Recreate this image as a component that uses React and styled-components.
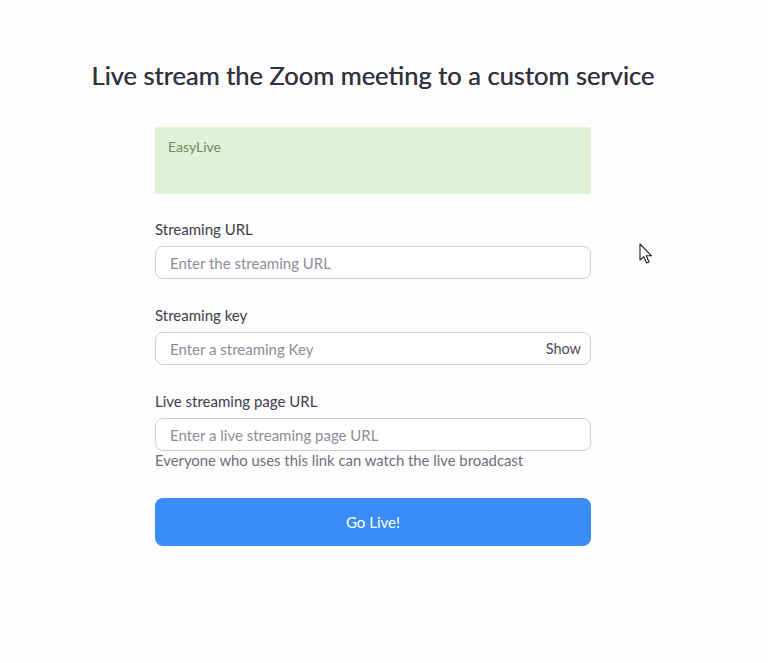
import React from "react"
import styled, { createGlobalStyle } from "styled-components"

const GlobalStyle = createGlobalStyle`
  html, body {
    margin: 0;
    padding: 0;
    background: #fdfdfd;
  }
  body {
    font-family: Lato, "Open Sans", "Liberation Sans", sans-serif;
    -webkit-font-smoothing: antialiased;
  }
`

//page
const Page = styled.main`
  position: relative;
  height: 663px;
  padding-right: 22px;
  display: flex;
  flex-direction: column;
  align-items: center;
  box-sizing: border-box;
`

//title
const Title = styled.h1`
  margin: 57px 0 34px;
  font-size: 25.5px;
  font-weight: 400;
  line-height: 36px;
  color: #33333f;
  text-shadow: 0 0 0.4px #33333f;
`

const Form = styled.form`
  width: 436px;
  display: flex;
  flex-direction: column;
`

//service banner
const Banner = styled.div`
  height: 67px;
  box-sizing: border-box;
  padding: 11px 13px;
  background: #e1f3d7;
  border-radius: 2px;
  font-size: 14px;
  color: #6e8a63;
`

const Field = styled.div`
  margin-top: ${props => props.gap || 27}px;
  display: flex;
  flex-direction: column;
`

const Label = styled.label`
  font-size: 15px;
  line-height: 18px;
  color: #3d3d4e;
  margin-bottom: 8px;
`

const InputBox = styled.div`
  height: 33px;
  box-sizing: border-box;
  border: 1px solid #cfcfd4;
  border-radius: 8px;
  background: #fff;
  display: flex;
  align-items: center;
  padding: 0 9px 0 14px;
`

const Input = styled.input`
  flex: 1;
  border: none;
  outline: none;
  background: transparent;
  font-family: inherit;
  font-size: 15px;
  color: #3d3d4e;
  padding: 0;

  &::placeholder {
    color: #8d8d99;
  }
`

const ShowToggle = styled.span`
  font-size: 14.5px;
  color: #4a4a58;
`

const Hint = styled.div`
  margin-top: 0;
  font-size: 14.85px;
  line-height: 18px;
  color: #6f6f7c;
`

//go live
const GoLive = styled.button`
  margin-top: 29px;
  height: 48px;
  border: none;
  border-radius: 8px;
  background: #3a8df6;
  color: #fff;
  font-family: inherit;
  font-size: 15px;
  cursor: pointer;
`

const Cursor = styled.svg`
  position: absolute;
  left: 639px;
  top: 243px;
`

export default function App() {
  return (
    <>
      <GlobalStyle />
      <Page>
        <Title>Live stream the Zoom meeting to a custom service</Title>
        <Form onSubmit={e => e.preventDefault()}>
          <Banner>EasyLive</Banner>

          <Field gap={26}>
            <Label>Streaming URL</Label>
            <InputBox>
              <Input placeholder="Enter the streaming URL" />
            </InputBox>
          </Field>

          <Field>
            <Label>Streaming key</Label>
            <InputBox>
              <Input placeholder="Enter a streaming Key" />
              <ShowToggle>Show</ShowToggle>
            </InputBox>
          </Field>

          <Field>
            <Label>Live streaming page URL</Label>
            <InputBox>
              <Input placeholder="Enter a live streaming page URL" />
            </InputBox>
            <Hint>Everyone who uses this link can watch the live broadcast</Hint>
          </Field>

          <GoLive type="submit">Go Live!</GoLive>
        </Form>

        <Cursor width="14" height="22" viewBox="0 0 14 22">
          <path d="M1 1 L1 17 L4.8 13.6 L7.6 20 L10 19 L7.3 12.8 L12.5 12.8 Z" fill="#fff" stroke="#222" strokeWidth="1.1" strokeLinejoin="round" />
        </Cursor>
      </Page>
    </>
  )
}
